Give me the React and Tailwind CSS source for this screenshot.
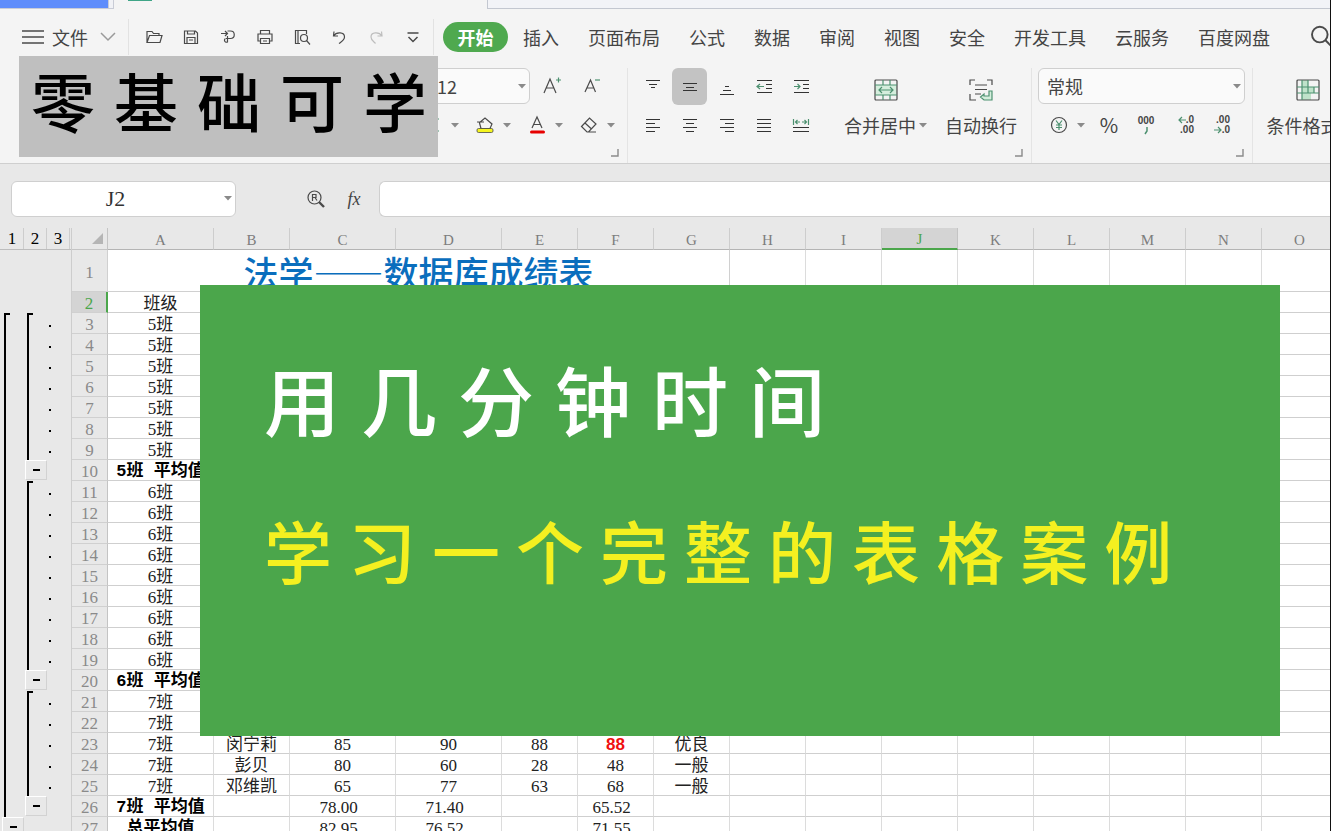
import { clsx } from "clsx";

const menuTabs = [
  "插入",
  "页面布局",
  "公式",
  "数据",
  "审阅",
  "视图",
  "安全",
  "开发工具",
  "云服务",
  "百度网盘",
];

const columns = [
  { name: "A", width: "w-[106px]" },
  { name: "B", width: "w-[76px]" },
  { name: "C", width: "w-[106px]" },
  { name: "D", width: "w-[106px]" },
  { name: "E", width: "w-[76px]" },
  { name: "F", width: "w-[76px]" },
  { name: "G", width: "w-[76px]" },
  { name: "H", width: "w-[76px]" },
  { name: "I", width: "w-[76px]" },
  { name: "J", width: "w-[76px]" },
  { name: "K", width: "w-[76px]" },
  { name: "L", width: "w-[76px]" },
  { name: "M", width: "w-[76px]" },
  { name: "N", width: "w-[76px]" },
  { name: "O", width: "w-[76px]" },
];

const classRows = (name, from, to) =>
  Array.from({ length: to - from + 1 }, (_, i) => ({
    n: from + i,
    cells: [name],
    first: i === 0,
  }));

const rows = [
  { n: 2, cells: ["班级"] },
  ...classRows("5班", 3, 9),
  { n: 10, cells: ["5班 平均值"], subtotal: true },
  ...classRows("6班", 11, 19),
  { n: 20, cells: ["6班 平均值"], subtotal: true },
  ...classRows("7班", 21, 22),
  { n: 23, cells: ["7班", "闵宁莉", "85", "90", "88", "88", "优良"] },
  { n: 24, cells: ["7班", "彭贝", "80", "60", "28", "48", "一般"] },
  { n: 25, cells: ["7班", "邓维凯", "65", "77", "63", "68", "一般"] },
  {
    n: 26,
    cells: ["7班 平均值", "", "78.00", "71.40", "", "65.52"],
    subtotal: true,
  },
  {
    n: 27,
    cells: ["总平均值", "", "82.95", "76.52", "", "71.55"],
    total: true,
  },
];

function Icon({ children, size = "size-5", className = "text-[#4a4a4a]" }) {
  return (
    <svg
      viewBox="0 0 20 20"
      className={clsx("shrink-0", size, className)}
      fill="none"
      stroke="currentColor"
      strokeWidth="1.2"
      aria-hidden="true"
    >
      {children}
    </svg>
  );
}

function Caret() {
  return (
    <svg viewBox="0 0 8 5" className="h-[5px] w-2 shrink-0" aria-hidden="true">
      <path d="M0 0h8L4 4.5z" fill="#8a8a8a" />
    </svg>
  );
}

function Launcher() {
  return (
    <button aria-label="更多设置" className="absolute bottom-1.5 right-2">
      <svg viewBox="0 0 8 8" className="size-2" fill="none" stroke="#8a8a8a" strokeWidth="1.4">
        <path d="M7 0v7H0" />
      </svg>
    </button>
  );
}

const quickTools = [
  {
    label: "打开",
    icon: <path d="M3 15.500V4.500h5l1.500 2H15v2M3 15.500l2.500-7H18l-2 7z" />,
  },
  {
    label: "保存",
    icon: <path d="M3.500 4h11l2 2v10.500h-13zM6.500 4v3h7V4M6 16.500V10.500h8v6M8 13h4" />,
  },
  {
    label: "输出",
    icon: (
      <path d="M3 6.500h6M7 4l2.500 2.500L7 9M9.500 4h3c5 0 5 7.500 0 7.500H8M9.500 9v6a2 2 0 1 1-2-3.500" />
    ),
  },
  {
    label: "打印",
    icon: (
      <path d="M5.500 7V3.500h9V7M5.500 14H3V7h14v7h-2.500M5.500 11.500h9v5h-9zM8 14h4" />
    ),
  },
  {
    label: "打印预览",
    icon: (
      <>
        <path d="M8 16.500H3.500v-13h11V7M6 16V4" />
        <circle cx="12" cy="11" r="3.500" />
        <path d="M14.500 13.500l3.500 4" />
      </>
    ),
  },
  { label: "撤销", icon: <path d="M5 4.500L4.500 9H9M4.500 9c3-4.500 11-4 11 1 0 3-2 4-5.500 6.500" /> },
  {
    label: "恢复",
    faded: true,
    icon: <path d="M15.500 4.500L16 9h-4.500M16 9c-3-4.500-11-4-11 1 0 3 2 4 4.500 6.500" />,
  },
  { label: "自定义", icon: <path d="M4.500 6h11M5.500 10l4.500 4.500 4.500-4.500" strokeWidth="1.500" /> },
];

const alignTools = [
  { label: "顶端对齐", icon: <path d="M3 3.500h14M6 7.500h8M8 10.500h4" /> },
  { label: "垂直居中", icon: <path d="M3 6.500h14M6 10.500h8M3 13.500h14" />, active: true },
  { label: "底端对齐", icon: <path d="M8 9.500h4M6 13.500h8M3 17.500h14" /> },
  {
    label: "减少缩进",
    icon: (
      <>
        <path d="M3 3.500h15M12 7.500h6M12 11.500h6M3 15.500h15" />
        <path d="M3 9.500h7M6 7L3 9.500l3 2.500" stroke="#4d9170" />
      </>
    ),
  },
  {
    label: "增加缩进",
    icon: (
      <>
        <path d="M3 3.500h15M12 7.500h6M12 11.500h6M3 15.500h15" />
        <path d="M3 9.500h6M6.500 7L9 9.500l-2.500 2.500" stroke="#4d9170" />
      </>
    ),
  },
  { label: "左对齐", icon: <path d="M3 3.500h14M3 7.500h9M3 11.500h14M3 15.500h9" /> },
  { label: "水平居中", icon: <path d="M3 3.500h14M6 7.500h8M3 11.500h14M6 15.500h8" /> },
  { label: "右对齐", icon: <path d="M3 3.500h14M8 7.500h9M3 11.500h14M8 15.500h9" /> },
  { label: "两端对齐", icon: <path d="M3 3.500h14M3 7.500h14M3 11.500h14M3 15.500h14" /> },
  {
    label: "分散对齐",
    icon: (
      <>
        <path d="M2 11.500h16M2 15.500h16" />
        <path
          d="M2.500 3v6M17.500 3v6M4.500 6H9M11 6h4.500M6.500 4l-2 2 2 2M13.500 4l2 2-2 2"
          stroke="#4d9170"
        />
      </>
    ),
  },
];

function TitleStrip() {
  return (
    <div className="flex h-[9px] shrink-0">
      <div className="w-[109px] border-b border-r border-[#c9ccd6] bg-[#5f8dfb]" />
      <div className="w-[5px] border-b border-r border-[#c9ccd6] bg-[#f1f2f6]" />
      <div className="w-[373px] pl-3.5">
        <div className="h-px w-6 bg-[#3fa587]" />
      </div>
      <div className="flex-1 border-b border-l border-[#c3c7d0] bg-[#f2f3f7]" />
    </div>
  );
}

function MenuBar() {
  return (
    <nav className="flex h-[57px] shrink-0 items-center pb-0.5 pl-[22px] text-[18px] leading-[26px] text-[#444]">
      <button className="flex shrink-0 items-center">
        <svg viewBox="0 0 22 16" className="h-4 w-[22px]" stroke="#4a4a4a" strokeWidth="1.500">
          <path d="M0 2h22M0 8h22M0 14h22" />
        </svg>
        <span className="ml-2 whitespace-nowrap">文件</span>
        <svg viewBox="0 0 16 10" className="ml-3 h-2.5 w-4" fill="none" stroke="#9a9a9a" strokeWidth="1.500">
          <path d="M1 1l7 7 7-7" />
        </svg>
      </button>
      <div className="ml-3 h-9 w-px shrink-0 bg-[#e2e2e2]" />
      <div className="flex shrink-0 gap-[17px] pl-[15px]">
        {quickTools.map((tool) => (
          <button key={tool.label} aria-label={tool.label}>
            <Icon className={tool.faded ? "text-[#bdbdbd]" : "text-[#4a4a4a]"}>
              {tool.icon}
            </Icon>
          </button>
        ))}
      </div>
      <div className="ml-2.5 h-9 w-px shrink-0 bg-[#e2e2e2]" />
      <button className="ml-[9px] h-[30px] w-[65px] shrink-0 rounded-full bg-[#4fa94f] font-bold text-white">
        开始
      </button>
      <div className="ml-[15px] flex shrink-0 gap-[29px]">
        {menuTabs.map((tab) => (
          <button key={tab} className="whitespace-nowrap">
            {tab}
          </button>
        ))}
      </div>
      <button aria-label="查找" className="ml-[39px] shrink-0">
        <Icon size="size-6">
          <circle cx="9" cy="8" r="6.500" strokeWidth="1.600" />
          <path d="M13.500 12.500l5 5" strokeWidth="1.600" />
        </Icon>
      </button>
    </nav>
  );
}

function FontGroup() {
  return (
    <div className="relative flex w-[628px] shrink-0 flex-col items-end border-r border-[#e4e4e4]">
      <div className="flex h-9 items-center pr-6">
        <label className="relative flex items-center">
          <select
            aria-label="字号"
            className="h-9 w-[106px] appearance-none rounded-md border border-[#cfcfcf] bg-[#fafafa] pl-3 text-[18px] text-[#444]"
          >
            <option>12</option>
          </select>
          <span className="pointer-events-none absolute right-1">
            <Caret />
          </span>
        </label>
        <button aria-label="增大字号" className="ml-3 flex w-5 justify-center">
          <Icon>
            <path d="M2 17L8 3l6 14M4 12h8" />
            <path d="M14 4h5M16.500 1.500v5" stroke="#4d9170" />
          </Icon>
        </button>
        <button aria-label="减小字号" className="ml-[21px] flex w-5 justify-center">
          <Icon>
            <path d="M2 16L7.500 4l5 12M4 12h7" />
            <path d="M12 4h5" stroke="#4d9170" />
          </Icon>
        </button>
      </div>
      <div className="mt-0.5 flex h-[38px] items-center gap-4 pr-3">
        <button aria-label="边框" className="flex items-center gap-2">
          <Icon className="text-[#4d9170]">
            <path d="M2 4h14M2 10h12M2 16h14M9 4v12" />
          </Icon>
          <Caret />
        </button>
        <button aria-label="填充颜色" className="flex items-center gap-2">
          <Icon>
            <path d="M2 7h7M4 8l6-5 7 6-2 4.500H6L4.500 8" />
            <rect x="2" y="13.500" width="16" height="4" rx="1.500" fill="#f5f51e" strokeWidth=".8" />
          </Icon>
          <Caret />
        </button>
        <button aria-label="字体颜色" className="flex items-center gap-2">
          <Icon>
            <path d="M5 13l5-11 5 11M6.500 9.500h7" />
            <path d="M4.500 17h12" stroke="#e60000" strokeWidth="3" strokeLinecap="round" />
          </Icon>
          <Caret />
        </button>
        <button aria-label="清除格式" className="flex items-center gap-2">
          <Icon>
            <path d="M2.500 11.500l8-8.500 6.500 6-7.500 8H8zM6 8l6.500 6M8 17h9" />
          </Icon>
          <Caret />
        </button>
      </div>
      <Launcher />
    </div>
  );
}

function AlignGroup() {
  return (
    <div className="relative flex w-[404px] shrink-0 border-r border-[#e4e4e4] pl-1.5">
      <div className="grid h-[76px] w-[186px] grid-cols-5 grid-rows-2 gap-y-0.5">
        {alignTools.map((tool) => (
          <button
            key={tool.label}
            aria-label={tool.label}
            className={clsx(
              "mx-px flex items-center justify-center rounded-md",
              tool.active && "bg-[#c3c3c3]",
            )}
          >
            <Icon className="text-[#333]">{tool.icon}</Icon>
          </button>
        ))}
      </div>
      <div className="ml-6 flex gap-[18px] pt-[11px] text-[18px] leading-[26px] text-[#444]">
        <button className="flex flex-col items-center">
          <svg viewBox="0 0 24 22" className="h-[22px] w-6" fill="none" strokeWidth="1.200" stroke="#4a4a4a">
            <path d="M1 6h22v10H1z" fill="#d5eedd" stroke="none" />
            <rect x="1" y="1" width="22" height="20" rx="1" />
            <path d="M9 1v5M16 1v5M9 16v5M16 16v5M1 6h22M1 16h22M5 11h14M8 8l-3 3 3 3M16 8l3 3-3 3" stroke="#4d9170" />
          </svg>
          <span className="mt-[11px] flex items-center whitespace-nowrap">
            合并居中
            <span className="ml-[3px]">
              <Caret />
            </span>
          </span>
        </button>
        <button className="flex flex-col items-center">
          <svg viewBox="0 0 24 22" className="h-[22px] w-6" fill="none" strokeWidth="1.200" stroke="#4a4a4a">
            <path d="M1 6V1h5M18 1h5v5M1 15v6h6M6 6h12M6 10.500h12M6 15h6" />
            <path d="M20 12v5h-5v-2L11.500 18l3.500 3h8v-9z" stroke="#4d9170" fill="#d5eedd" />
          </svg>
          <span className="mt-[11px] whitespace-nowrap">自动换行</span>
        </button>
      </div>
      <Launcher />
    </div>
  );
}

function NumberGroup() {
  return (
    <div className="relative flex w-[221px] shrink-0 flex-col border-r border-[#e4e4e4] pl-1.5">
      <label className="relative flex w-[207px] items-center">
        <select
          aria-label="数字格式"
          className="h-9 w-full appearance-none rounded-md border border-[#cfcfcf] bg-[#fafafa] pl-2 text-[18px] text-[#444]"
        >
          <option>常规</option>
        </select>
        <span className="pointer-events-none absolute right-1">
          <Caret />
        </span>
      </label>
      <div className="mt-0.5 flex h-[38px] items-center text-[#444]">
        <button aria-label="货币" className="ml-[11px] flex items-center gap-2">
          <Icon>
            <circle cx="10" cy="10" r="7.500" />
            <path d="M7 5.500l3 4 3-4M10 9.500V15M7 10h6M7 12.500h6" stroke="#4d9170" />
          </Icon>
          <Caret />
        </button>
        <button className="ml-[14px] w-5 text-[20px] leading-[26px]">%</button>
        <button className="ml-[17px] flex w-5 flex-col items-center font-['Liberation_Sans'] text-[10px] font-bold leading-[10px]">
          000
          <svg viewBox="0 0 6 8" className="mt-px h-2 w-1.5" fill="none" stroke="#4d9170" strokeWidth="1.500">
            <path d="M4 0v4L2 7" />
          </svg>
        </button>
        <button className="ml-[18px] flex w-5 flex-col items-end font-['Liberation_Sans'] text-[10px] font-bold leading-[10px]">
          <span className="flex items-center">
            <svg viewBox="0 0 8 8" className="size-2" fill="none" stroke="#4d9170" strokeWidth="1.200">
              <path d="M8 4H1M4 1L1 4l3 3" />
            </svg>
            .0
          </span>
          <span>.00</span>
        </button>
        <button className="ml-4 flex w-5 flex-col items-end font-['Liberation_Sans'] text-[10px] font-bold leading-[10px]">
          <span>.00</span>
          <span className="flex items-center">
            <svg viewBox="0 0 8 8" className="size-2" fill="none" stroke="#4d9170" strokeWidth="1.200">
              <path d="M0 4h7M4 1l3 3-3 3" />
            </svg>
            .0
          </span>
        </button>
      </div>
      <Launcher />
    </div>
  );
}

function Ribbon() {
  return (
    <div className="shrink-0 border-b border-[#cfcfcf]">
      <div className="flex h-[97px] pt-0.5">
        <FontGroup />
        <AlignGroup />
        <NumberGroup />
        <button className="ml-3 flex w-[86px] shrink-0 flex-col items-center pt-[11px] text-[18px] leading-[26px] text-[#444]">
          <svg viewBox="0 0 24 22" className="h-[22px] w-6" fill="none" strokeWidth="1.200" stroke="#4a4a4a">
            <path d="M6 1h6v7H6zM6 8h12v6H6zM6 14h9v7H6z" fill="#bfe3ca" stroke="none" />
            <rect x="1" y="1" width="22" height="20" rx="1" />
            <path d="M1 8h22M1 14h22M6 1v20M12 1v13M18 8v6" stroke="#4d9170" />
          </svg>
          <span className="mt-[11px] flex items-center whitespace-nowrap">
            条件格式
            <span className="ml-[3px]">
              <Caret />
            </span>
          </span>
        </button>
      </div>
    </div>
  );
}

function FormulaBar() {
  return (
    <div className="flex h-16 shrink-0 items-center pb-px pl-[11px] pt-1.5">
      <label className="relative flex w-[225px] shrink-0 items-center">
        <input
          aria-label="名称框"
          defaultValue="J2"
          className="h-9 w-full rounded-md border border-[#cfcfcf] bg-white pr-4 text-center font-['Liberation_Serif','Noto_Sans_CJK_SC',serif] text-[22px] text-[#333]"
        />
        <span className="pointer-events-none absolute right-1">
          <Caret />
        </span>
      </label>
      <button aria-label="查找引用" className="ml-[70px]">
        <Icon>
          <circle cx="8.500" cy="8.500" r="6.500" />
          <path d="M13 13l5 5" strokeWidth="2.400" />
          <path d="M6.500 12V5.500h3.500v3H6.500M9 8.500l2 3" />
        </Icon>
      </button>
      <button
        aria-label="插入函数"
        className="ml-[18px] w-5 font-['Liberation_Serif',serif] text-[18px] italic leading-[26px] text-[#444]"
      >
        fx
      </button>
      <input
        aria-label="编辑栏"
        className="ml-[15px] h-9 min-w-0 flex-1 rounded-l-md border border-r-0 border-[#cfcfcf] bg-white px-2"
      />
    </div>
  );
}

function CollapseButton() {
  return (
    <button
      aria-label="折叠"
      className="flex h-5 w-[22px] items-center justify-center border border-b-[#d2d2d2] border-l-white border-r-[#d2d2d2] border-t-white"
    >
      <span className="h-0.5 w-[7px] bg-black" />
    </button>
  );
}

function OutlineGutter() {
  return (
    <aside className="w-[72px] shrink-0 border-r border-[#cdcdcd]">
      <div className="flex h-[22px] border-b border-[#bdbdbd] pl-px font-['Liberation_Serif',serif] text-[17px] leading-[21px] text-black">
        {["1", "2", "3"].map((level) => (
          <button key={level} className="w-[23px] border-r border-[#cdcdcd]">
            {level}
          </button>
        ))}
      </div>
      <div className="h-[42px]" />
      {rows.map((row) => {
        const grouped = row.n > 2 && !row.subtotal && !row.total;
        return (
          <div key={row.n} className="flex h-[21px]">
            <div className={clsx("w-[22px] shrink-0", row.total ? "pl-0.5" : "pl-1")}>
              {row.n > 2 && !row.total && (
                <div
                  className={clsx(
                    "h-full w-1.5 border-l-2 border-black",
                    row.n === 3 && "border-t-2",
                  )}
                />
              )}
              {row.total && <CollapseButton />}
            </div>
            <div className={clsx("w-6 shrink-0", row.subtotal ? "pl-[3px]" : "pl-[5px]")}>
              {grouped && (
                <div
                  className={clsx(
                    "h-full w-1.5 border-l-2 border-black",
                    row.first && "border-t-2",
                  )}
                />
              )}
              {row.subtotal && <CollapseButton />}
            </div>
            <div className="flex w-6 items-center pl-[3px]">
              {grouped && <span className="mt-1 size-0.5 bg-black" />}
            </div>
          </div>
        );
      })}
    </aside>
  );
}

function Sheet() {
  return (
    <table className="w-[1266px] shrink-0 table-fixed border-separate border-spacing-0 bg-white text-center font-['Liberation_Serif','Noto_Sans_CJK_SC',serif] text-[17px] leading-[17px] text-[#222]">
      <thead>
        <tr className="h-[22px] bg-[#e8e8e8] text-[#7d7d7d]">
          <th className="w-9 border-b border-r border-[#c4c4c4] p-0">
            <svg viewBox="0 0 11 11" className="ml-5 size-[11px]" aria-hidden="true">
              <path d="M11 0v11H0z" fill="#b5b5b5" />
            </svg>
          </th>
          {columns.map((col) => (
            <th
              key={col.name}
              scope="col"
              className={clsx(
                "border-r p-0 pt-[3px] text-[15px] font-normal",
                col.width,
                col.name === "J"
                  ? "border-b-2 border-b-[#4ba64b] border-r-[#c4c4c4] bg-[#d4d4d4] text-[#4ba64b]"
                  : "border-b border-b-[#b4b4b4] border-r-[#cdcdcd]",
              )}
            >
              {col.name}
            </th>
          ))}
        </tr>
      </thead>
      <tbody>
        <tr className="h-[42px]">
          <th
            scope="row"
            className="border-b border-r border-[#d0d0d0] bg-[#e8e8e8] p-0 pt-[3px] font-normal text-[#8a8a8a]"
          >
            1
          </th>
          <td
            colSpan={7}
            lang="zh-CN"
            className="border-b border-r border-[#d0d0d0] p-0 pt-[3px] font-['Noto_Sans_CJK_SC',sans-serif] text-[35px] font-medium leading-[38px] text-[#0a6ebd]"
          >
            法学<span className="[font-kerning:none] [font-variant-ligatures:none]">——</span>数据库成绩表
          </td>
          {columns.slice(7).map((col) => (
            <td key={col.name} className="border-b border-r border-b-[#cfcfcf] border-r-[#dcdcdc] p-0" />
          ))}
        </tr>
        {rows.map((row) => (
          <tr key={row.n} className="h-[21px]">
            <th
              scope="row"
              className={clsx(
                "border-b border-b-[#d0d0d0] p-0 pt-[3px] font-normal",
                row.n === 2
                  ? "border-r-2 border-r-[#4ba64b] bg-[#d4d4d4] text-[#4ba64b]"
                  : "border-r border-r-[#c4c4c4] bg-[#e8e8e8] text-[#8a8a8a]",
              )}
            >
              {row.n}
            </th>
            {columns.map((col, i) => (
              <td
                key={col.name}
                className={clsx(
                  "whitespace-nowrap border-b border-r border-b-[#cfcfcf] border-r-[#dcdcdc] p-0 pt-[3px]",
                  i === 0 &&
                    (row.subtotal || row.total) &&
                    "font-['Liberation_Mono','Noto_Sans_CJK_SC',monospace] font-bold text-black",
                  i > 0 && (row.subtotal || row.total) && "pr-2",
                  row.n === 23 &&
                    col.name === "F" &&
                    "font-['Liberation_Sans',sans-serif] font-bold text-[#f01010]",
                )}
              >
                {row.cells[i]}
              </td>
            ))}
          </tr>
        ))}
      </tbody>
    </table>
  );
}

function SpacedText({ text, className }) {
  return (
    <p className={clsx("flex font-medium", className)}>
      {text.split("").map((char, i) => (
        <span key={i}>{char}</span>
      ))}
    </p>
  );
}

export default function App() {
  return (
    <div className="relative flex h-screen flex-col overflow-hidden border-r border-[#111] bg-[#f4f4f4] font-['Noto_Sans_CJK_SC',sans-serif]">
      <TitleStrip />
      <MenuBar />
      <Ribbon />
      <div className="flex min-h-0 flex-1 flex-col bg-[#e8e8e8]">
        <FormulaBar />
        <div className="flex min-h-0 flex-1 items-start overflow-hidden">
          <OutlineGutter />
          <Sheet />
        </div>
      </div>

      {/* Captions laid over the spreadsheet */}
      <div className="absolute left-[19px] top-14 flex h-[101px] w-[419px] items-center bg-[#bfbfbf] pb-4 pl-3">
        <SpacedText
          text="零基础可学"
          className="gap-[19px] text-[64px] leading-[64px] text-black"
        />
      </div>
      <div className="absolute left-[200px] top-[285px] h-[451px] w-[1080px] bg-[#4ba64b] pl-16 pt-[75px]">
        <SpacedText
          text="用几分钟时间"
          className="gap-[21px] text-[76px] leading-[76px] text-white"
        />
        <SpacedText
          text="学习一个完整的表格案例"
          className="mt-20 gap-4 text-[68px] leading-[68px] text-[#f4f020]"
        />
      </div>
    </div>
  );
}
